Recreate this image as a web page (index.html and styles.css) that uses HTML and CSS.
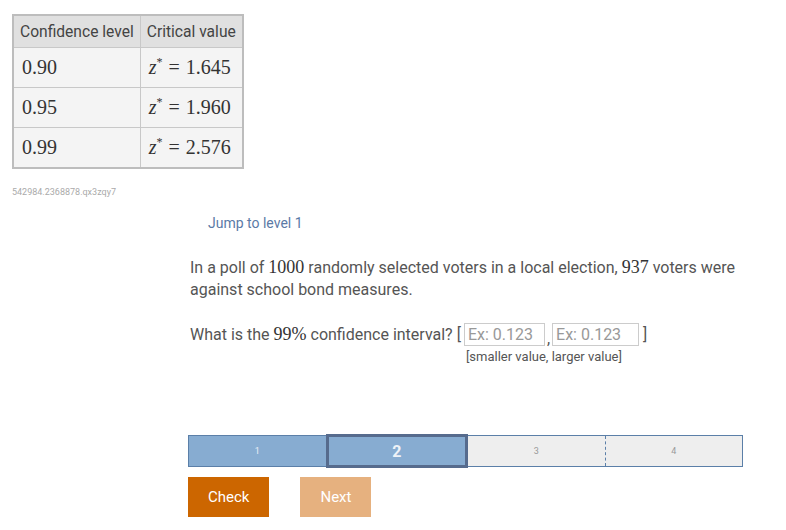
FILE: index.html
```html
<!DOCTYPE html>
<html lang="en">

<head>
  <meta charset="UTF-8">
  <title>Confidence interval</title>
  <link rel="stylesheet" href="styles.css">
</head>

<body>
  <div class="page">
    <table class="crit-table">
      <tr>
        <th>Confidence level</th>
        <th>Critical value</th>
      </tr>
      <tr>
        <td><span class="math">0.90</span></td>
        <td><span class="math"><i>z</i><sup>*</sup><span class="eq">=</span>1.645</span></td>
      </tr>
      <tr>
        <td><span class="math">0.95</span></td>
        <td><span class="math"><i>z</i><sup>*</sup><span class="eq">=</span>1.960</span></td>
      </tr>
      <tr>
        <td><span class="math">0.99</span></td>
        <td><span class="math"><i>z</i><sup>*</sup><span class="eq">=</span>2.576</span></td>
      </tr>
    </table>

    <div class="activity-id">542984.2368878.qx3zqy7</div>

    <div class="activity">
      <a class="jump" href="#">Jump to level 1</a>

      <p class="prompt">
        <span>In a poll of <span class="math">1000</span> randomly selected voters in a local election, <span class="math">937</span> voters were</span><br>
        <span>against school bond measures.</span>
      </p>

      <div class="question">
        <span class="question-text">What is the <span class="math">99%</span> confidence interval? [</span>
        <div class="answers">
          <div class="answer-row">
            <input class="answer" type="text" placeholder="Ex: 0.123">
            <span class="comma">,</span>
            <input class="answer answer-wide" type="text" placeholder="Ex: 0.123">
            <span class="bracket">]</span>
          </div>
          <div class="hint">[smaller value, larger value]</div>
        </div>
      </div>

      <div class="levels">
        <div class="level done">1</div>
        <div class="level done current">2</div>
        <div class="level">3</div>
        <div class="level dashed">4</div>
      </div>

      <div class="buttons">
        <button class="btn check">Check</button>
        <button class="btn next">Next</button>
      </div>
    </div>
  </div>
</body>

</html>
```

FILE: styles.css
```css
html,
body {
  margin: 0;
  padding: 0;
  background: #fff;
  font-family: Roboto, "Liberation Sans", sans-serif;
  color: #444;
}

.page {
  padding: 14px 0 0 12px;
}

.math {
  font-family: "Liberation Serif", "DejaVu Serif", serif;
  font-size: 18px;
  color: #333;
}

.prompt .math,
.question .math {
  display: inline-block;
  line-height: 18px;
}

.math i {
  font-style: italic;
}

.math sup {
  font-size: 12px;
  line-height: 0;
}

.math .eq {
  margin: 0 6px;
}

/* table of critical values */
.crit-table {
  border-collapse: collapse;
  border: 2px solid #bdbdbd;
}

.crit-table th {
  background: #e0e0e0;
  font-weight: normal;
  font-size: 15.6px;
  color: #444;
  text-align: left;
  padding: 0 6px;
  height: 31px;
  border: 1px solid #c8c8c8;
}

.crit-table td {
  background: #f4f4f4;
  padding: 0 8px;
  height: 39px;
  border: 1px solid #c8c8c8;
}

.crit-table td .math {
  font-size: 20px;
}

.activity-id {
  margin-top: 18px;
  font-size: 9px;
  color: #aaa;
}

.activity {
  margin-left: 176px;
  width: 555px;
}

.jump {
  display: block;
  margin: 18px 0 0 20px;
  font-size: 14px;
  color: #5b7aa6;
  text-decoration: none;
}

.prompt {
  margin: 26px 0 0 2px;
  font-size: 16px;
  line-height: 22px;
  color: #555;
}

.question {
  display: flex;
  align-items: flex-start;
  margin: 22px 0 0 2px;
  font-size: 16px;
  color: #555;
}

.question-text {
  line-height: 23px;
}

.answers {
  margin-left: 3px;
}

.answer-row {
  display: flex;
  align-items: flex-start;
}

.answer {
  width: 81px;
  box-sizing: border-box;
  height: 23px;
  border: 1px solid #ccc;
  padding: 0 3px;
  font-family: Roboto, "Liberation Sans", sans-serif;
  font-size: 16px;
  color: #555;
}

.answer-wide {
  width: 87px;
}

.answer::placeholder {
  color: #999;
}

.comma {
  align-self: flex-end;
  margin: 0 2px;
  line-height: 15px;
}

.bracket {
  margin-left: 4px;
  line-height: 23px;
}

.hint {
  font-size: 13px;
  color: #555;
  line-height: 16px;
  margin: 3px 0 0 2px;
}

/* level bar */
.levels {
  display: flex;
  margin-top: 70px;
  height: 30px;
  border: 1px solid #5b7fa8;
}

.level {
  flex: 1;
  display: flex;
  align-items: center;
  justify-content: center;
  background: #eee;
  color: #999;
  font-size: 9px;
}

.level.done {
  background: #87acd1;
  color: #e8eef5;
}

.level.current {
  margin: -2px 0;
  border: 3px solid #566b8d;
  font-size: 16px;
  font-weight: bold;
  color: #eef2f7;
}

.level.dashed {
  border-left: 1px dashed #5b7fa8;
}

.buttons {
  display: flex;
  gap: 31px;
  margin-top: 10px;
}

.btn {
  height: 40px;
  border: none;
  padding: 0 20px;
  font-family: Roboto, "Liberation Sans", sans-serif;
  font-size: 15px;
  color: #fff;
  cursor: pointer;
}

.check {
  background: #cc6600;
}

.next {
  background: #e6b17f;
}
```
